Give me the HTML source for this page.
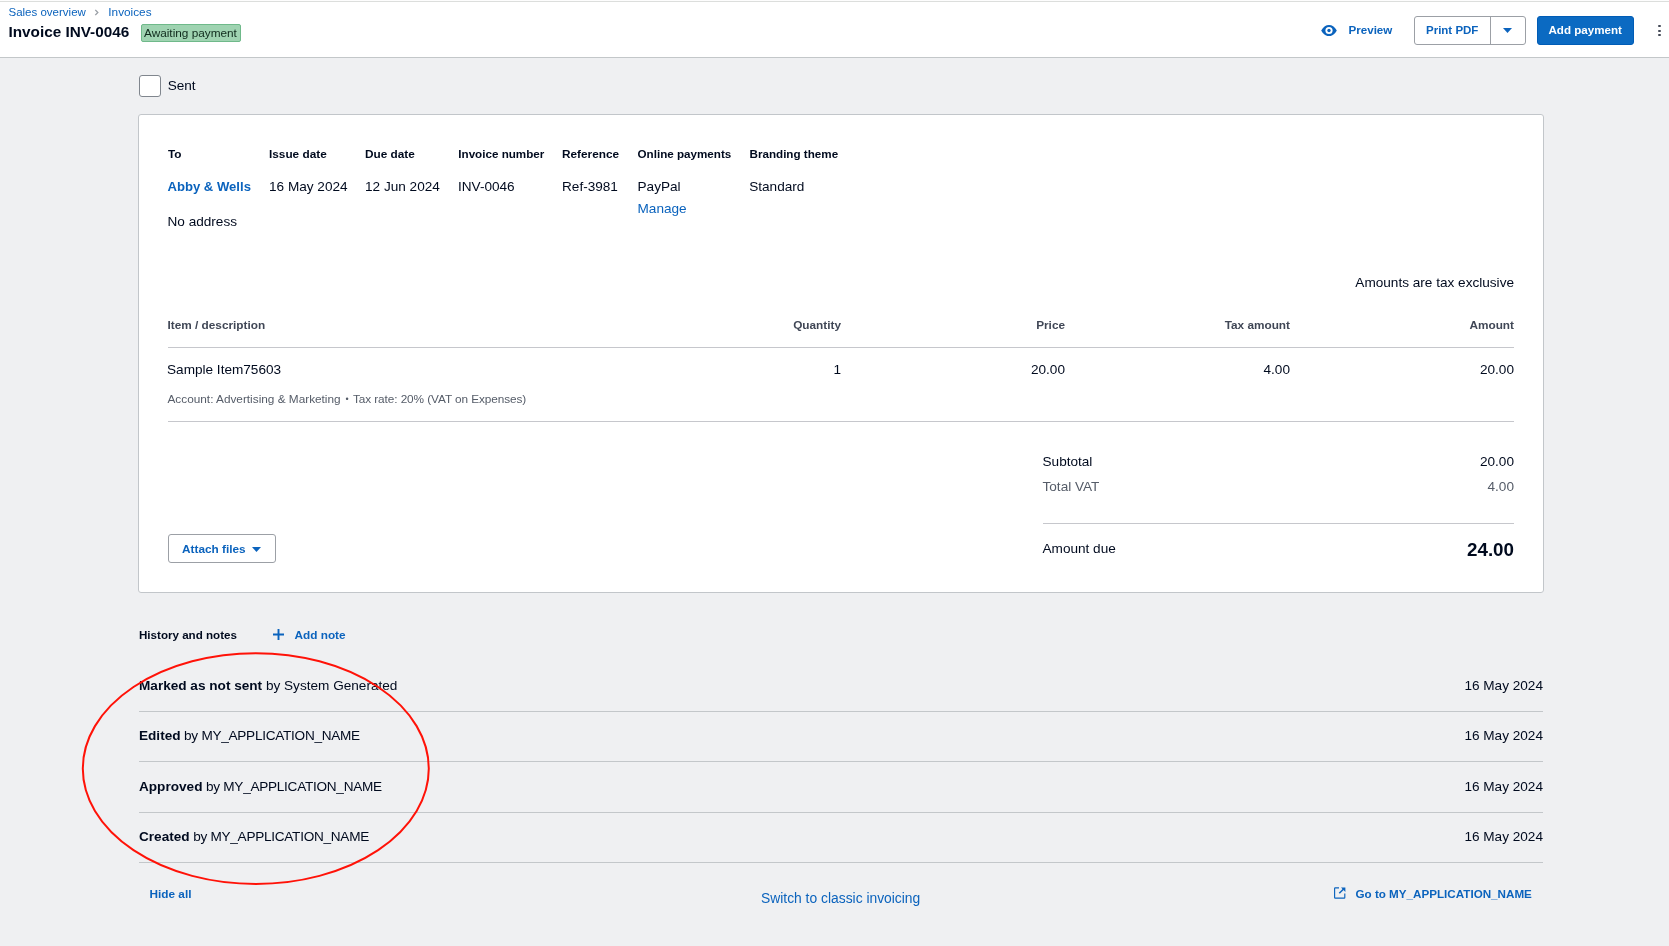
<!DOCTYPE html>
<html><head><meta charset="utf-8">
<style>
html,body{margin:0;padding:0;}
body{width:1669px;height:946px;overflow:hidden;position:relative;background:#eff0f2;font-family:"Liberation Sans",sans-serif;color:#000a1e;}
.a{position:absolute;white-space:nowrap;line-height:1;}
.s12{font-size:11.8px;}
.s14{font-size:13.6px;}
.b{font-weight:bold;}
.blue{color:#0b63bd;}
.gray{color:#404756;}
.r{text-align:right;}
.hline{position:absolute;height:1px;background:#c6c7cc;}
.hl2{position:absolute;height:1px;background:#c3c7ca;}
#topbar{position:absolute;left:0;top:0;width:1669px;height:1px;background:#fdfdfd;}
#topline{position:absolute;left:0;top:1px;width:1669px;height:1px;background:#dcdedc;}
#header{position:absolute;left:0;top:2px;width:1669px;height:55px;background:#fff;border-bottom:1px solid #c3c7c9;}
.badge{position:absolute;left:141px;top:24px;width:98px;height:16px;background:#9fd3b1;border:1px solid #6fb98a;border-radius:2px;}
.btn{position:absolute;box-sizing:border-box;border:1px solid #9ca0a6;border-radius:3px;background:#fff;}
#card{position:absolute;left:138px;top:114px;width:1406px;height:479px;box-sizing:border-box;background:#fff;border:1px solid #c2c6ca;border-radius:3px;}
.cb{position:absolute;left:139px;top:75px;width:22px;height:22px;box-sizing:border-box;border:1px solid #80868e;border-radius:3px;background:#fff;}
</style></head><body><div id="root" style="position:absolute;left:0;top:0;width:1669px;height:946px;will-change:transform;">
<div id="topbar"></div><div id="topline"></div>
<div id="header"></div>

<!-- breadcrumb -->
<div class="a blue" style="left:8.5px;top:6.5px;font-size:11.5px;">Sales overview</div>
<svg class="a" style="left:93.9px;top:8.8px;" width="6" height="7.5" viewBox="0 0 6 7.5"><path d="M1.3 0.9 L3.8 3.5 L1.3 6.1" fill="none" stroke="#9a9fa6" stroke-width="1.35"/></svg>
<div class="a s12 blue" style="left:108.3px;top:6.5px;">Invoices</div>
<div class="a b" style="left:8.5px;top:24px;font-size:15.3px;">Invoice INV-0046</div>
<div class="badge"></div>
<div class="a s12" style="left:144px;top:27.7px;color:#0f2a1c;">Awaiting payment</div>

<!-- header actions -->
<svg class="a" style="left:1321px;top:24.8px;" width="16" height="11.2" viewBox="0 0 16 11.2"><path d="M0.2 5.6 C2.5 1.6 5 0 8 0 C11 0 13.5 1.6 15.8 5.6 C13.5 9.6 11 11.2 8 11.2 C5 11.2 2.5 9.6 0.2 5.6 Z" fill="#0b63bd"/><circle cx="8" cy="5.5" r="3.6" fill="#fff"/><circle cx="8" cy="5.5" r="1.7" fill="#0b63bd"/></svg>
<div class="a b blue" style="left:1348.5px;top:23.6px;font-size:11.6px;">Preview</div>
<div class="btn" style="left:1414px;top:16px;width:112px;height:29px;"></div>
<div style="position:absolute;left:1490px;top:16px;width:1px;height:29px;background:#9ca0a6;"></div>
<div class="a b blue" style="left:1426px;top:25px;font-size:11.5px;">Print PDF</div>
<svg class="a" style="left:1503px;top:28px;" width="9" height="5" viewBox="0 0 9 5"><path d="M0 0 H9 L4.5 5 Z" fill="#0b63bd"/></svg>
<div style="position:absolute;left:1537px;top:16px;width:97px;height:29px;box-sizing:border-box;background:#0b6ac2;border:1px solid #005cb6;border-radius:3px;"></div>
<div class="a b" style="left:1548.5px;top:24px;font-size:11.6px;color:#fff;">Add payment</div>
<div style="position:absolute;left:1658.3px;top:25.1px;width:2.4px;height:2.4px;background:#434956;border-radius:50%;"></div>
<div style="position:absolute;left:1658.3px;top:29.5px;width:2.4px;height:2.4px;background:#434956;border-radius:50%;"></div>
<div style="position:absolute;left:1658.3px;top:33.8px;width:2.4px;height:2.4px;background:#434956;border-radius:50%;"></div>

<!-- sent checkbox -->
<div class="cb"></div>
<div class="a s14" style="left:167.7px;top:79px;">Sent</div>

<!-- card -->
<div id="card"></div>
<div class="a s12 b" style="left:168px;top:149px;">To</div>
<div class="a s12 b" style="left:269px;top:149px;">Issue date</div>
<div class="a s12 b" style="left:365px;top:149px;">Due date</div>
<div class="a b" style="left:458.3px;top:148.4px;font-size:11.65px;">Invoice number</div>
<div class="a s12 b" style="left:562px;top:149px;">Reference</div>
<div class="a b" style="left:637.5px;top:148.4px;font-size:11.65px;">Online payments</div>
<div class="a b" style="left:749.5px;top:148.4px;font-size:11.65px;">Branding theme</div>

<div class="a b blue" style="left:167.5px;top:179.5px;font-size:13.1px;">Abby &amp; Wells</div>
<div class="a s14" style="left:269px;top:179.5px;">16 May 2024</div>
<div class="a s14" style="left:365px;top:179.5px;">12 Jun 2024</div>
<div class="a s14" style="left:458px;top:179.5px;">INV-0046</div>
<div class="a s14" style="left:562px;top:179.5px;">Ref-3981</div>
<div class="a s14" style="left:637.5px;top:179.5px;">PayPal</div>
<div class="a s14" style="left:749.2px;top:179.5px;">Standard</div>
<div class="a s14 blue" style="left:637.5px;top:201.5px;">Manage</div>
<div class="a s14" style="left:167.5px;top:214.5px;">No address</div>

<div class="a s14 r" style="right:155px;top:276px;">Amounts are tax exclusive</div>

<div class="a s12 b gray" style="left:167.5px;top:320px;">Item / description</div>
<div class="a s12 b gray r" style="right:828px;top:320px;">Quantity</div>
<div class="a s12 b gray r" style="right:604px;top:320px;">Price</div>
<div class="a s12 b gray r" style="right:379px;top:320px;">Tax amount</div>
<div class="a s12 b gray r" style="right:155px;top:320px;">Amount</div>
<div class="hline" style="left:168px;top:347px;width:1346px;"></div>

<div class="a s14" style="left:167px;top:363px;">Sample Item75603</div>
<div class="a s14 r" style="right:828px;top:363px;">1</div>
<div class="a s14 r" style="right:604px;top:363px;">20.00</div>
<div class="a s14 r" style="right:379px;top:363px;">4.00</div>
<div class="a s14 r" style="right:155px;top:363px;">20.00</div>
<div class="a s12" style="left:167.5px;top:393.6px;color:#555c68;">Account: Advertising &amp; Marketing <span style="font-size:9px;vertical-align:0.5px;margin:0 1px 0 1.6px">•</span> <span style="letter-spacing:-0.08px">Tax rate: 20% (VAT on Expenses)</span></div>
<div class="hline" style="left:168px;top:421px;width:1346px;"></div>

<div class="a s14" style="left:1042.5px;top:454.6px;">Subtotal</div>
<div class="a s14 r" style="right:155px;top:454.6px;">20.00</div>
<div class="a s14" style="left:1042.5px;top:479.6px;color:#555c68;">Total VAT</div>
<div class="a s14 r" style="right:155px;top:479.6px;color:#555c68;">4.00</div>
<div class="hline" style="left:1043px;top:523px;width:471px;"></div>
<div class="a s14" style="left:1042.5px;top:541.6px;">Amount due</div>
<div class="a b r" style="right:155px;top:540.6px;font-size:18.8px;">24.00</div>

<div class="btn" style="left:168px;top:534px;width:108px;height:29px;"></div>
<div class="a s12 b blue" style="left:182px;top:544px;">Attach files</div>
<svg class="a" style="left:252px;top:547px;" width="9" height="5" viewBox="0 0 9 5"><path d="M0 0 H9 L4.5 5 Z" fill="#0b63bd"/></svg>

<!-- history -->
<div class="a b" style="left:139px;top:628.5px;font-size:11.6px;">History and notes</div>
<svg class="a" style="left:272.8px;top:628.8px;" width="11" height="11" viewBox="0 0 11 11"><path d="M5.5 0 V11 M0 5.5 H11" stroke="#0b63bd" stroke-width="1.9"/></svg>
<div class="a s12 b blue" style="left:294.5px;top:629.5px;">Add note</div>

<div class="a s14" style="left:139px;top:679px;"><b>Marked as not sent</b> by System Generated</div>
<div class="a s14 r" style="right:126px;top:679px;">16 May 2024</div>
<div class="hl2" style="left:139px;top:711px;width:1404px;"></div>
<div class="a s14" style="left:139px;top:729px;"><b>Edited</b><span style="letter-spacing:-0.27px"> by MY_APPLICATION_NAME</span></div>
<div class="a s14 r" style="right:126px;top:729px;">16 May 2024</div>
<div class="hl2" style="left:139px;top:761px;width:1404px;"></div>
<div class="a s14" style="left:139px;top:779.7px;"><b>Approved</b><span style="letter-spacing:-0.27px"> by MY_APPLICATION_NAME</span></div>
<div class="a s14 r" style="right:126px;top:780px;">16 May 2024</div>
<div class="hl2" style="left:139px;top:812px;width:1404px;"></div>
<div class="a s14" style="left:139px;top:830px;"><b>Created</b><span style="letter-spacing:-0.27px"> by MY_APPLICATION_NAME</span></div>
<div class="a s14 r" style="right:126px;top:830px;">16 May 2024</div>
<div class="hl2" style="left:139px;top:862px;width:1404px;"></div>

<div class="a s12 b blue" style="left:149.5px;top:889px;">Hide all</div>
<div class="a blue" style="left:761px;top:891.5px;font-size:13.85px;">Switch to classic invoicing</div>
<svg class="a" style="left:1333.5px;top:886.5px;" width="12" height="12" viewBox="0 0 12 12"><path d="M5 0.9 H1.2 Q0.6 0.9 0.6 1.5 V10.5 Q0.6 11.1 1.2 11.1 H10.2 Q10.8 11.1 10.8 10.5 V6.5" fill="none" stroke="#0b63bd" stroke-width="1.15"/><path d="M5.3 6.3 L9.6 2" stroke="#0b63bd" stroke-width="1.5"/><path d="M7 0.5 H11.4 V4.9 Z" fill="#0b63bd"/></svg>
<div class="a b blue" style="left:1355.5px;top:888px;font-size:11.65px;">Go to MY_APPLICATION_NAME</div>

<!-- annotation ellipse -->
<svg class="a" style="left:0;top:0;" width="1669" height="946"><ellipse cx="255.8" cy="768.6" rx="173" ry="115.4" fill="none" stroke="#ff1208" stroke-width="2"/></svg>
</div></body></html>
